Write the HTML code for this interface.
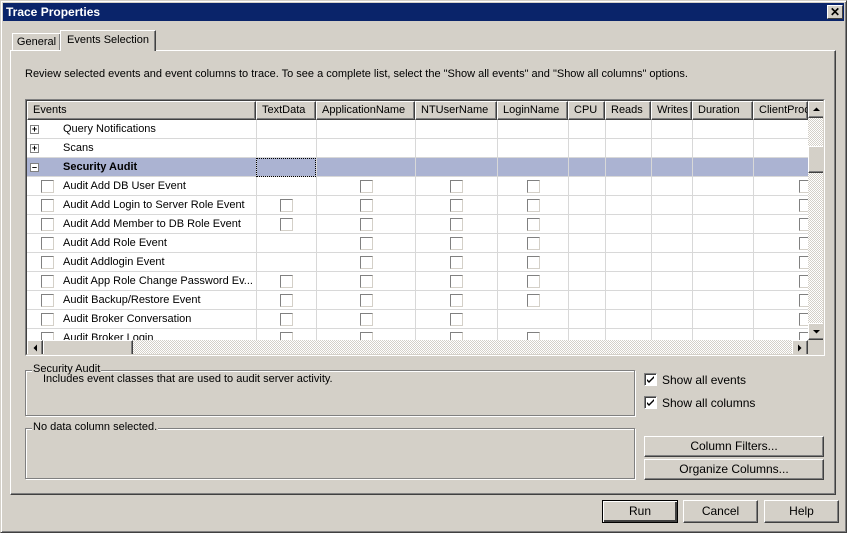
<!DOCTYPE html>
<html><head><meta charset="utf-8">
<style>
*{box-sizing:border-box;margin:0;padding:0}
body{width:847px;height:533px;background:#d4d0c8;font-family:"Liberation Sans",Tahoma,sans-serif;font-size:11px;color:#000;position:relative;overflow:hidden}
.a{position:absolute}
.win{left:0;top:0;width:847px;height:533px;border:1px solid;border-color:#d4d0c8 #404040 #404040 #d4d0c8;box-shadow:inset 1px 1px #fff,inset -1px -1px #808080}
.title{left:3px;top:3px;width:841px;height:18px;background:#0a246a;color:#fff;font-weight:bold;font-size:12px;line-height:18px;padding-left:3px}
.close{left:827px;top:5px;width:16px;height:14px;background:#d4d0c8;border:1px solid;border-color:#fff #404040 #404040 #fff;font-size:12px;line-height:12px;text-align:center;font-weight:bold;color:#000}
.panel{left:10px;top:50px;width:826px;height:445px;border:1px solid;border-color:#fff #404040 #404040 #fff;box-shadow:inset -1px -1px #808080}
.tab{background:#d4d0c8;border:1px solid;border-bottom:none;border-color:#fff #404040 #404040 #fff;text-align:center;line-height:16px;box-shadow:inset -1px 0 #808080}
.grid{left:25px;top:99px;width:800px;height:257px;border:1px solid;border-color:#808080 #fff #fff #808080;background:#fff;overflow:hidden}
.grid .in{position:absolute;left:0;top:0;width:798px;height:255px;border:1px solid;border-color:#404040 #d4d0c8 #d4d0c8 #404040;overflow:hidden}
.hd{top:0;height:19px;background:#d4d0c8;border:1px solid;border-color:#fff #404040 #404040 #fff;box-shadow:inset -1px -1px #808080;line-height:17px;padding-left:5px;white-space:nowrap;overflow:hidden}
.cb{width:13px;height:13px;border:1px solid;border-color:#808080 #d4d0c8 #d4d0c8 #808080;background:#fff}
.cb2{width:13px;height:13px;border:1px solid;border-color:#808080 #fff #fff #808080;box-shadow:inset 1px 1px #404040;background:#fff}
.grp{border:1px solid #808080;box-shadow:1px 1px #fff,inset 1px 1px #fff}
.lbl{background:#d4d0c8;padding:0 1px}
.btn{border:1px solid;border-color:#fff #404040 #404040 #fff;box-shadow:inset -1px -1px #808080;text-align:center;background:#d4d0c8;font-size:12px}
.sb{background:#d4d0c8;border:1px solid;border-color:#fff #404040 #404040 #fff;box-shadow:inset -1px -1px #808080}
.track{background-color:#eceae6;background-image:repeating-conic-gradient(#d4d0c8 0 25%,#fff 0 50%);background-size:2px 2px}
</style></head><body>
<div class="a win"></div>
<div class="a title">Trace Properties</div>
<div class="a close">✕</div>

<div class="a panel"></div>
<div class="a tab" style="left:12px;top:33px;width:49px;height:17px;font-size:11px">General</div>
<div class="a tab" style="left:60px;top:30px;width:96px;height:21px;font-size:11px;border-bottom:none;line-height:19px">Events Selection</div>

<div class="a" style="left:25px;top:68px;font-size:11px">Review selected events and event columns to trace. To see a complete list, select the "Show all events" and "Show all columns" options.</div>

<div class="a grid"><div class="in" id="g"></div></div>

<div class="a grp" style="left:25px;top:370px;width:610px;height:46px"></div>
<div class="a lbl" style="left:32px;top:363px">Security Audit</div>
<div class="a" style="left:43px;top:373px">Includes event classes that are used to audit server activity.</div>

<div class="a grp" style="left:25px;top:428px;width:610px;height:51px"></div>
<div class="a lbl" style="left:32px;top:421px">No data column selected.</div>

<div class="a cb2" style="left:644px;top:373px"><svg width="11" height="11" style="position:absolute;left:0;top:0"><path d="M2 5l2 2 5-5v2l-5 5-2-2z" fill="#000"/></svg></div>
<div class="a" style="left:662px;top:373px;font-size:12px">Show all events</div>
<div class="a cb2" style="left:644px;top:396px"><svg width="11" height="11" style="position:absolute;left:0;top:0"><path d="M2 5l2 2 5-5v2l-5 5-2-2z" fill="#000"/></svg></div>
<div class="a" style="left:662px;top:396px;font-size:12px">Show all columns</div>

<div class="a btn" style="left:644px;top:436px;width:180px;height:21px;line-height:19px">Column Filters...</div>
<div class="a btn" style="left:644px;top:459px;width:180px;height:21px;line-height:19px">Organize Columns...</div>

<div class="a btn" style="left:602px;top:500px;width:76px;height:23px;line-height:21px;border-color:#000;box-shadow:inset 1px 1px #fff,inset -2px -2px #404040">Run</div>
<div class="a btn" style="left:683px;top:500px;width:75px;height:23px;line-height:21px">Cancel</div>
<div class="a btn" style="left:764px;top:500px;width:75px;height:23px;line-height:21px">Help</div>

<script>
var g=document.getElementById('g');
var cols=[["Events",0,229],["TextData",229,60],["ApplicationName",289,99],["NTUserName",388,82],["LoginName",470,71],["CPU",541,37],["Reads",578,46],["Writes",624,41],["Duration",665,61],["ClientProc",726,55]];
var h='';
var rowsY=19;
var rows=[["Query Notifications","+",[]],["Scans","+",[]],["Security Audit","-",[]],
["Audit Add DB User Event","",[2,3,4,9]],["Audit Add Login to Server Role Event","",[1,2,3,4,9]],["Audit Add Member to DB Role Event","",[1,2,3,4,9]],
["Audit Add Role Event","",[2,3,4,9]],["Audit Addlogin Event","",[2,3,4,9]],["Audit App Role Change Password Ev...","",[1,2,3,4,9]],
["Audit Backup/Restore Event","",[1,2,3,4,9]],["Audit Broker Conversation","",[1,2,3,9]],["Audit Broker Login","",[1,2,3,4,9]]];
rows.forEach(function(r,i){
 var y=rowsY+i*19;
 if(i==2)h+='<div class="a" style="left:0;top:'+y+'px;width:781px;height:19px;background:#abb3d2"></div>';
 h+='<div class="a" style="left:0;top:'+(y+18)+'px;width:781px;height:1px;background:#d8d8d8"></div>';
 if(r[1]){h+='<div class="a" style="left:3px;top:'+(y+5)+'px;width:9px;height:9px;border:1px solid #808080;background:#fff;font-size:9px;line-height:7px;text-align:center;font-weight:bold">'+(r[1]=='+'?'+':'–')+'</div>';}
 else h+='<div class="a cb" style="left:14px;top:'+(y+3)+'px"></div>';
 h+='<div class="a" style="left:36px;top:'+(y+3)+'px;'+(i==2?'font-weight:bold;':'')+'white-space:nowrap">'+r[0]+'</div>';
 r[2].forEach(function(c){var col=cols[c];var x=c==9?col[1]+col[2]-9:col[1]+Math.round(col[2]/2)-6;
  h+='<div class="a cb" style="left:'+x+'px;top:'+(y+3)+'px"></div>';});
});
cols.forEach(function(c,i){if(i>0)h+='<div class="a" style="left:'+c[1]+'px;top:19px;width:1px;height:240px;background:#d8d8d8"></div>';});
h+='<div class="a" style="left:229px;top:57px;width:60px;height:19px;border:1px dotted #000"></div>';
cols.forEach(function(c){h+='<div class="a hd" style="left:'+c[1]+'px;width:'+c[2]+'px">'+c[0]+'</div>';});
h+='<div class="a track" style="left:781px;top:0;width:17px;height:239px"></div>';
h+='<div class="a sb" style="left:781px;top:0;width:17px;height:17px"><svg width="15" height="15" style="position:absolute;left:0;top:0"><path d="M4 9h7L7.5 5.5z" fill="#000"/></svg></div>';
h+='<div class="a sb" style="left:781px;top:45px;width:17px;height:27px"></div>';
h+='<div class="a sb" style="left:781px;top:222px;width:17px;height:17px"><svg width="15" height="15" style="position:absolute;left:0;top:0"><path d="M4 6h7L7.5 9.5z" fill="#000"/></svg></div>';
h+='<div class="a track" style="left:0;top:239px;width:781px;height:16px"></div>';
h+='<div class="a sb" style="left:0;top:239px;width:16px;height:16px"><svg width="14" height="14" style="position:absolute;left:0;top:0"><path d="M9 3.5v7L5.5 7z" fill="#000"/></svg></div>';
h+='<div class="a sb" style="left:16px;top:239px;width:90px;height:16px"></div>';
h+='<div class="a sb" style="left:765px;top:239px;width:16px;height:16px"><svg width="14" height="14" style="position:absolute;left:0;top:0"><path d="M5 3.5v7L8.5 7z" fill="#000"/></svg></div>';
h+='<div class="a" style="left:781px;top:239px;width:17px;height:16px;background:#d4d0c8"></div>';
g.innerHTML=h;
</script>
</body></html>
